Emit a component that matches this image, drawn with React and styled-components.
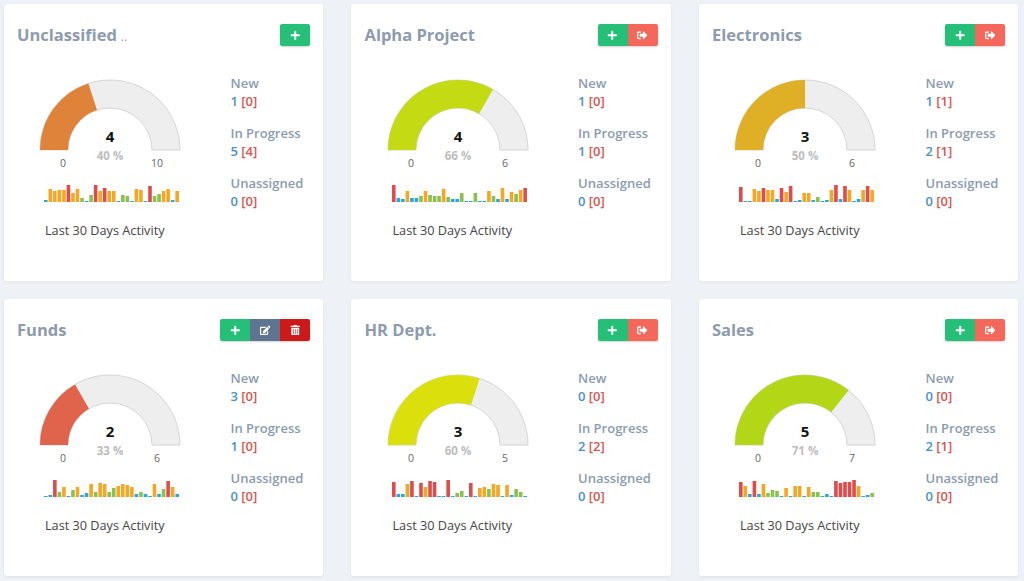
import React from 'react';
import styled, { createGlobalStyle } from 'styled-components';
import { FaPlus, FaEdit, FaTrashAlt, FaSignOutAlt } from 'react-icons/fa';

const BAR_COLORS = { b: '#2ba6de', g: '#8cc152', o: '#f5a623', r: '#e04b4b' };

const projects = [
  {
    title: 'Unclassified', more: true, value: 4, max: 10, percent: 40, color: '#e0833a',
    stats: [['New', 1, 0], ['In Progress', 5, 4], ['Unassigned', 0, 0]],
    actions: ['add'],
    bars: 'b2 o13 o11 o12 o12 r17 o9 o13 g4 b1 g7 r17 o11 r14 o11 o11 b1 g7 g6 b1 o13 o12 b1 r16 g6 g8 o11 o13 b2 o11',
  },
  {
    title: 'Alpha Project', value: 4, max: 6, percent: 66, color: '#c4da12',
    stats: [['New', 1, 0], ['In Progress', 1, 0], ['Unassigned', 0, 0]],
    actions: ['add', 'leave'],
    bars: 'r17 b4 b3 o11 b4 b4 g6 o11 g7 g6 g6 o13 g5 b3 b3 g9 b1 b1 g9 b1 b1 o11 g6 b3 o14 b3 o10 g8 o12 r14',
  },
  {
    title: 'Electronics', value: 3, max: 6, percent: 50, color: '#dfb025',
    stats: [['New', 1, 1], ['In Progress', 2, 1], ['Unassigned', 0, 0]],
    actions: ['add', 'leave'],
    bars: 'r15 b1 b1 o13 o11 r14 o12 o12 b3 r14 o10 r16 b1 b2 o9 o9 b2 g5 b1 b2 o12 r17 b3 r16 o12 b1 b3 o12 r16 o12',
  },
  {
    title: 'Funds', value: 2, max: 6, percent: 33, color: '#e0634c',
    stats: [['New', 3, 0], ['In Progress', 1, 0], ['Unassigned', 0, 0]],
    actions: ['add', 'edit', 'remove'],
    bars: 'b1 b2 r17 g5 o10 b1 g7 o10 b2 b4 o13 g5 o14 o13 g5 g9 o11 o13 o12 o10 b3 g5 b3 b1 o13 b3 g8 r16 o10 b3',
  },
  {
    title: 'HR Dept.', value: 3, max: 5, percent: 60, color: '#dbdf0b',
    stats: [['New', 0, 0], ['In Progress', 2, 2], ['Unassigned', 0, 0]],
    actions: ['add', 'leave'],
    bars: 'r15 b3 b3 o13 r16 b1 r14 o10 r16 r15 b1 b1 r17 b1 g4 g6 b1 r14 b1 o9 o10 g8 o13 o12 b1 o12 b2 g8 g5 b1',
  },
  {
    title: 'Sales', value: 5, max: 7, percent: 71, color: '#b3d616',
    stats: [['New', 0, 0], ['In Progress', 2, 1], ['Unassigned', 0, 0]],
    actions: ['add', 'leave'],
    bars: 'r15 o11 b3 r16 b3 o13 g4 g7 g6 b1 o9 b1 o11 o11 b1 o10 g5 g5 b1 b3 b1 r16 r14 r15 r15 r17 o11 b1 b2 g4',
  },
];

const ACTION_ICONS = {
  add: <FaPlus />,
  leave: <FaSignOutAlt />,
  edit: <FaEdit />,
  remove: <FaTrashAlt />,
};

const Gauge = ({ value, max, percent, color }) => {
  const cx = 93;
  const cy = 72;
  const outer = 70;
  const inner = 42;
  const angle = Math.PI * (1 - value / max);
  const ox = cx + outer * Math.cos(angle);
  const oy = cy - outer * Math.sin(angle);
  const ix = cx + inner * Math.cos(angle);
  const iy = cy - inner * Math.sin(angle);
  const track = `M${cx - outer} ${cy}A${outer} ${outer} 0 0 1 ${cx + outer} ${cy}H${cx + inner}A${inner} ${inner} 0 0 0 ${cx - inner} ${cy}Z`;
  const fill = `M${cx - outer} ${cy}A${outer} ${outer} 0 0 1 ${ox} ${oy}L${ix} ${iy}A${inner} ${inner} 0 0 0 ${cx - inner} ${cy}Z`;

  return (
    <GaugeSvg width="173" height="94" viewBox="0 0 173 94">
      <path d={track} fill="#eeeeee" stroke="#d4d6d8" strokeWidth="1" />
      <path d={fill} fill={color} />
      <GaugeValue x={cx} y={cy - 14}>{value}</GaugeValue>
      <GaugePercent x={cx} y={cy + 5}>{percent} %</GaugePercent>
      <GaugeLimit x={cx - 47} y={cy + 13}>0</GaugeLimit>
      <GaugeLimit x={cx + 47} y={cy + 13}>{max}</GaugeLimit>
    </GaugeSvg>
  );
};

const Sparkline = ({ bars }) => (
  <SparkSvg width="136" height="18" viewBox="0 0 136 18">
    {bars.split(' ').map((bar, i) => {
      const height = Number(bar.slice(1));
      return (
        <rect
          key={i}
          x={i * 4.53}
          y={18 - height}
          width="3.6"
          height={height}
          fill={BAR_COLORS[bar[0]]}
        />
      );
    })}
  </SparkSvg>
);

const ProjectCard = ({ project }) => (
  <Card>
    <Header>
      <Title>
        {project.title}
        {project.more && <More>..</More>}
      </Title>
      <Actions>
        {project.actions.map((action) => (
          <ActionButton key={action} $kind={action}>
            {ACTION_ICONS[action]}
          </ActionButton>
        ))}
      </Actions>
    </Header>
    <Body>
      <Chart>
        <Gauge
          value={project.value}
          max={project.max}
          percent={project.percent}
          color={project.color}
        />
        <Sparkline bars={project.bars} />
        <Caption>Last 30 Days Activity</Caption>
      </Chart>
      <Stats>
        {project.stats.map(([label, count, overdue]) => (
          <Stat key={label}>
            <StatLabel>{label}</StatLabel>
            <StatValue>
              <Count>{count}</Count> <Overdue>[{overdue}]</Overdue>
            </StatValue>
          </Stat>
        ))}
      </Stats>
    </Body>
  </Card>
);

const App = () => (
  <>
    <GlobalStyle />
    <Page>
      {projects.map((project) => (
        <ProjectCard key={project.title} project={project} />
      ))}
    </Page>
  </>
);

//-----------Styles--------------

const GlobalStyle = createGlobalStyle`
  html, body {
    margin: 0;
    height: 100%;
    overflow: hidden;
    background: #eef1f6;
    font-family: "Open Sans", "Liberation Sans", sans-serif;
  }
`;

const Page = styled.div`
  display: grid;
  grid-template-columns: repeat(3, 319.5px);
  grid-auto-rows: 277px;
  gap: 18px 28px;
  padding: 4px 0 0 3.5px;
`;

const Card = styled.div`
  box-sizing: border-box;
  padding: 20px 13px 0 13.5px;
  background: #ffffff;
  border-radius: 3px;
  box-shadow: 0 1px 3px rgba(120, 135, 160, 0.12);
`;

const Header = styled.div`
  display: flex;
  align-items: center;
  justify-content: space-between;
  height: 22px;
`;

const Title = styled.div`
  margin-top: -2px;
  font-size: 16.5px;
  font-weight: 700;
  color: #8d9bae;
`;

const More = styled.span`
  margin-left: 4px;
  font-size: 12px;
  font-weight: 400;
`;

const Actions = styled.div`
  display: flex;
  overflow: hidden;
  border-radius: 2px;
  box-shadow: 0 1px 2px rgba(0, 0, 0, 0.18);
`;

const ACTION_BG = {
  add: '#26bf78',
  leave: '#f4675a',
  edit: '#5f7490',
  remove: '#cc1a1a',
};

const ActionButton = styled.div`
  display: flex;
  align-items: center;
  justify-content: center;
  width: 30px;
  height: 22px;
  font-size: 10.5px;
  color: #ffffff;
  background: ${(p) => ACTION_BG[p.$kind]};
`;

const Body = styled.div`
  display: flex;
  margin-top: 28px;
`;

const Chart = styled.div`
  display: flex;
  flex-direction: column;
  width: 213.5px;
  padding-top: 4px;
`;

const GaugeSvg = styled.svg`
  display: block;
`;

const GaugeValue = styled.text`
  font-size: 15px;
  font-weight: 700;
  fill: #111111;
  text-anchor: middle;
  dominant-baseline: central;
`;

const GaugePercent = styled.text`
  font-size: 11.5px;
  font-weight: 700;
  fill: #bdbdbd;
  text-anchor: middle;
  dominant-baseline: central;
`;

const GaugeLimit = styled.text`
  font-size: 10.5px;
  fill: #666666;
  text-anchor: middle;
  dominant-baseline: central;
`;

const SparkSvg = styled.svg`
  display: block;
  margin: 12px 0 0 27px;
`;

const Caption = styled.div`
  margin: 19px 0 0 28px;
  font-size: 12.7px;
  line-height: 18px;
  color: #444444;
`;

const Stats = styled.div`
  display: flex;
  flex-direction: column;
  gap: 14px;
`;

const Stat = styled.div`
  font-size: 13px;
  font-weight: 600;
  line-height: 18px;
`;

const StatLabel = styled.div`
  color: #8a9bb0;
`;

const StatValue = styled.div`
  white-space: pre;
`;

const Count = styled.span`
  color: #4a90c8;
`;

const Overdue = styled.span`
  color: #d9534f;
`;

//-----------------End Styles---------------

export default App;
